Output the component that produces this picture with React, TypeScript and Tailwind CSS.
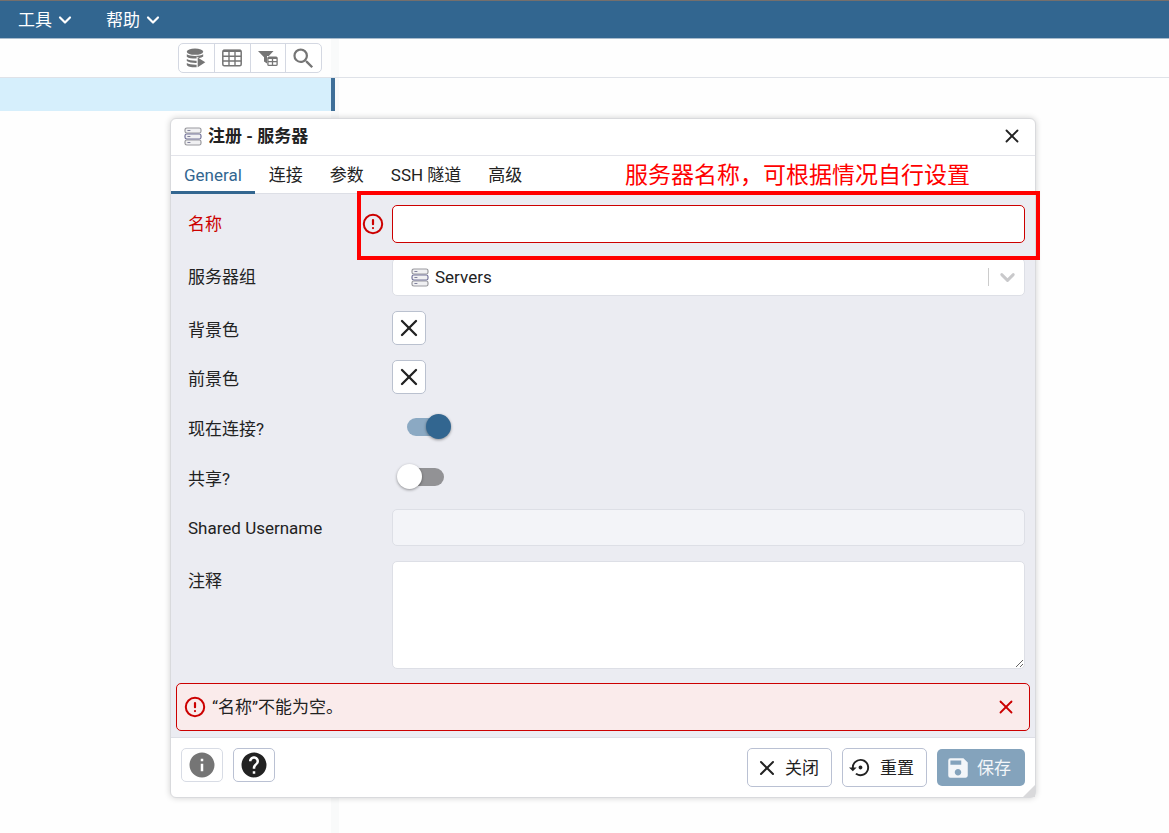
import { useState } from 'react';
import type { ReactNode } from 'react';
import { ChevronDown, X } from 'lucide-react';
import { MdHelp, MdInfo, MdSave, MdSearch, MdSettingsBackupRestore } from 'react-icons/md';

const tabs = ['General', '连接', '参数', 'SSH 隧道', '高级'];

function ServerIcon({ className = '' }: { className?: string }) {
  return (
    <svg width="18" height="19" viewBox="0 0 18 19" fill="#f0f0f2" className={className} aria-hidden="true">
      <rect x="1" y="1" width="16" height="5" rx="1.8" stroke="#9a9a9f" strokeWidth="1.2" />
      <rect x="1" y="13" width="16" height="5" rx="1.8" stroke="#9a9a9f" strokeWidth="1.2" />
      <rect x="1" y="7" width="16" height="5" rx="1.8" stroke="#74749a" strokeWidth="1.2" />
      <path d="M3.8 3.500h2.200M3.800 9.500h2.200M3.800 15.500h2.200" stroke="#80809c" strokeLinecap="round" />
    </svg>
  );
}

function ErrorIcon({ className = '' }: { className?: string }) {
  return (
    <svg width="22" height="22" viewBox="0 0 22 22" fill="none" stroke="#cc0000" className={className} aria-hidden="true">
      <circle cx="11" cy="11" r="9.2" strokeWidth="2" />
      <path d="M11 7v4.2M11 15v.1" strokeWidth="2.2" strokeLinecap="round" />
    </svg>
  );
}

function QueryIcon() {
  return (
    <svg width="20" height="20" viewBox="0 0 20 20" fill="#757575" aria-hidden="true">
      <ellipse cx="9" cy="3.7" rx="8.2" ry="3.1" />
      <path d="M.8 6.3C3.6 8.6 14.4 8.6 17.2 6.3v2.2c-1 .9-2.4 1.3-4 1.6L10.6 8.6v2c-4 .1-8-.4-9.8-1.9z" />
      <path d="M.8 11c1.8 1.3 5.8 1.8 9.8 1.7v2.2c-4 .1-8-.4-9.8-1.8z" />
      <path d="M.8 15.1c1.8 1.3 5.8 1.8 9.8 1.7v2.4c-5 .2-9-.7-9.8-2.3z" />
      <path d="M11.7 9.4l7.600 4.800-7.600 5z" />
    </svg>
  );
}

function TableIcon() {
  return (
    <svg width="20" height="18" viewBox="0 0 20 18" fill="none" stroke="#757575" aria-hidden="true">
      <rect x=".8" y="1.2" width="18.4" height="15.6" rx="1.5" strokeWidth="1.5" />
      <path d="M1 1.9h18" strokeWidth="2.4" />
      <path d="M1 7.3h18M1 12h18M7 2v15M13 2v15" strokeWidth="1.4" />
    </svg>
  );
}

function FilterTableIcon() {
  return (
    <svg width="20" height="17" viewBox="0 0 20 17" fill="none" aria-hidden="true">
      <path d="M0 1h15.5L9.7 7.2V14L6 11.6V7.2z" fill="#757575" />
      <rect x="9" y="6" width="11" height="11" fill="#fff" />
      <rect x="9.9" y="7.2" width="9.2" height="8.2" rx="1" stroke="#757575" strokeWidth="1.3" />
      <path d="M10 8h9" stroke="#757575" strokeWidth="2" />
      <path d="M10 11.7h9M14.5 8v7" stroke="#757575" strokeWidth="1.3" />
    </svg>
  );
}

function ToolButton({ label, children }: { label: string; children: ReactNode }) {
  return (
    <button aria-label={label} className="flex flex-1 items-center justify-center border-r border-[#d4d8e2] last:border-r-0">
      {children}
    </button>
  );
}

function Row({ label, id, labelClass = '', top, children }: { label: string; id: string; labelClass?: string; top?: boolean; children: ReactNode }) {
  return (
    <div className={`flex ${top ? 'items-start' : 'items-center'}`}>
      <label htmlFor={id} className={`w-51 shrink-0 ${labelClass}`}>
        {label}
      </label>
      <div className="min-w-0 flex-1">{children}</div>
    </div>
  );
}

function Switch({ id, defaultChecked }: { id: string; defaultChecked?: boolean }) {
  return (
    <div className="relative ml-[5px] flex h-[35px] w-14 items-center">
      <input
        id={id}
        type="checkbox"
        role="switch"
        defaultChecked={defaultChecked}
        className="peer ml-2.5 h-[18px] w-[37px] cursor-pointer appearance-none rounded-full bg-[#929295] checked:bg-[#8ba9c3]"
      />
      <span className="pointer-events-none absolute left-0 size-[25px] rounded-full bg-white shadow-[0_1px_3px_rgba(0,0,0,0.4)] peer-checked:left-[29px] peer-checked:bg-[#326690]" />
    </div>
  );
}

function ColorButton({ id }: { id: string }) {
  return (
    <button id={id} className="flex size-[34px] items-center justify-center rounded-[5px] border border-[#bac1cf] bg-white">
      <X size={28} strokeWidth={2} />
    </button>
  );
}

export default function App() {
  const [active, setActive] = useState('General');

  return (
    <div className="relative flex min-h-screen flex-col bg-[#fefefe] font-['Roboto','Noto_Sans_CJK_SC',sans-serif] text-[17px] leading-6 text-[#222]">
      <nav className="flex h-[39px] shrink-0 items-center gap-[31px] border-t border-b border-t-[#756f6c] border-b-[#a9bccd] bg-[#326690] pt-px pl-[18px] text-white">
        {['工具', '帮助'].map((item) => (
          <button key={item} className="flex items-center gap-[3px]">
            {item}
            <ChevronDown size={20} strokeWidth={2.6} />
          </button>
        ))}
      </nav>

      <div className="flex h-[39px] shrink-0 border-b border-[#dfe2e8]">
        <div className="flex w-[331px] shrink-0 items-center justify-end pr-[9px]">
          <div className="flex h-[30px] w-36 overflow-hidden rounded-[5px] border border-[#d4d8e2] bg-white">
            <ToolButton label="查询工具"><QueryIcon /></ToolButton>
            <ToolButton label="查看数据"><TableIcon /></ToolButton>
            <ToolButton label="筛选行"><FilterTableIcon /></ToolButton>
            <ToolButton label="搜索对象"><MdSearch size={27} color="#757575" /></ToolButton>
          </div>
        </div>
        <div className="w-2 bg-[#f9fafa]" />
      </div>

      <div className="flex flex-1">
        <div className="w-[331px] shrink-0">
          <div className="h-[33px] bg-[#d6effc]" />
        </div>
        <div className="w-2 bg-[#f9fafa]">
          <div className="h-[33px] w-1 bg-[#3f6f98]" />
        </div>
      </div>

      <div role="dialog" aria-label="注册 - 服务器" className="absolute top-[118px] right-[133px] left-[170px] rounded-md border border-[#d9dadd] bg-white shadow-[0_0_6px_rgba(0,0,0,0.18)]">
        <header className="flex h-[37px] items-center border-b border-[#e3e4ea] pr-3 pb-0.5 pl-[13px]">
          <ServerIcon />
          <h1 className="ml-1.5 flex-1 font-bold">注册 - 服务器</h1>
          <button aria-label="关闭窗口">
            <X size={22} strokeWidth={2} />
          </button>
        </header>

        <div role="tablist" className="flex h-[38px] gap-px border-b border-[#dddfe6]">
          {tabs.map((tab) => (
            <button
              key={tab}
              role="tab"
              aria-selected={tab === active}
              onClick={() => setActive(tab)}
              className={`-mb-px border-b-[3px] px-[13px] pt-0.5 ${tab === active ? 'border-[#326690] text-[#326690]' : 'border-transparent'}`}
            >
              {tab}
            </button>
          ))}
        </div>

        <div className="border-b border-[#dddfe6] bg-[#ebecf2] px-[5px] pt-[11px] pb-1.5">
          <div className="flex flex-col gap-[15px] pr-[5px] pl-3">
            <Row label="名称" id="name" labelClass="text-[#cc0000]">
              <div className="relative">
                <ErrorIcon className="absolute top-2 -left-[30px]" />
                <input id="name" className="block h-[38px] w-full rounded-[5px] border border-[#cc0000] bg-white px-3 outline-none" />
              </div>
            </Row>
            <Row label="服务器组" id="group">
              <div className="relative">
                <select id="group" className="block h-[38px] w-full appearance-none rounded-[5px] border border-[#dddfe6] bg-white pr-12 pl-[42px] outline-none">
                  <option>Servers</option>
                </select>
                <ServerIcon className="pointer-events-none absolute top-2.5 left-[19px]" />
                <span className="pointer-events-none absolute inset-y-2.5 right-0 flex w-[37px] items-center justify-center border-l border-[#ccc] text-[#c9c9cb]">
                  <ChevronDown size={23} strokeWidth={3} />
                </span>
              </div>
            </Row>
            <Row label="背景色" id="bgcolor" labelClass="pt-1"><ColorButton id="bgcolor" /></Row>
            <Row label="前景色" id="fgcolor" labelClass="pt-1"><ColorButton id="fgcolor" /></Row>
            <Row label="现在连接?" id="connect" labelClass="pt-1"><Switch id="connect" defaultChecked /></Row>
            <Row label="共享?" id="shared" labelClass="pt-1"><Switch id="shared" /></Row>
            <Row label="Shared Username" id="username">
              <input id="username" disabled className="block h-[37px] w-full rounded-[5px] border border-[#dddfe6] bg-[#f3f4f8] px-3" />
            </Row>
            <Row label="注释" id="comment" labelClass="pt-2" top>
              <textarea id="comment" className="block h-[108px] w-full resize-y rounded-[5px] border border-[#dddfe6] bg-white px-3 py-2 outline-none" />
            </Row>
          </div>

          <div role="alert" className="mt-3.5 flex h-12 items-center rounded-[5px] border border-[#cc0000] bg-[#faebeb] pr-3 pl-[7px]">
            <ErrorIcon />
            <span className="ml-1.5 flex-1">“名称”不能为空。</span>
            <button aria-label="关闭提示" className="text-[#cc0000]">
              <X size={22} strokeWidth={2} />
            </button>
          </div>
        </div>

        <footer className="relative flex h-[59px] items-start gap-2.5 px-2.5 pt-2.5">
          <button aria-label="信息" className="flex h-[34px] w-[42px] items-center justify-center rounded-[5px] border border-[#d8dce5]">
            <MdInfo size={30} color="#757575" />
          </button>
          <button aria-label="帮助" className="mr-auto flex h-[34px] w-[42px] items-center justify-center rounded-[5px] border border-[#bac1d3]">
            <MdHelp size={30} />
          </button>
          <button className="flex h-[39px] items-center gap-1.5 rounded-[5px] border border-[#bac1d3] pr-3 pl-[7px]">
            <X size={24} strokeWidth={2} />
            关闭
          </button>
          <button className="flex h-[39px] items-center gap-2 rounded-[5px] border border-[#bac1d3] pr-3 pl-1.5">
            <MdSettingsBackupRestore size={23} />
            重置
          </button>
          <button disabled className="mt-px flex h-[37px] items-center gap-1.5 rounded-[5px] bg-[#84a3bc] pr-3.5 pl-2 text-[#f3f6f9]">
            <MdSave size={26} />
            保存
          </button>
          <svg width="12" height="12" viewBox="0 0 12 12" className="absolute right-0 bottom-0" aria-hidden="true">
            <path d="M12 0v12H0z" fill="#d9d9db" />
          </svg>
        </footer>

        <div className="pointer-events-none absolute top-[72px] -right-[5px] left-[186px] h-[69px] border-4 border-[#ff0000]" />
        <p className="pointer-events-none absolute top-[41px] right-[65px] text-[23px] leading-8 text-[#ff0000]">服务器名称，可根据情况自行设置</p>
      </div>
    </div>
  );
}
